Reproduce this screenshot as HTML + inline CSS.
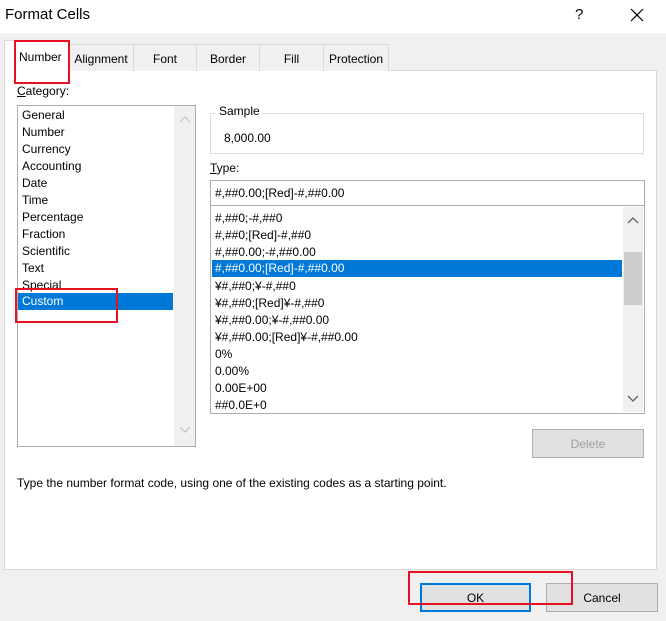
<!DOCTYPE html>
<html><head><style>
*{margin:0;padding:0;box-sizing:border-box}
body{width:666px;height:621px;background:#f0f0f0;font-family:"Segoe UI","Liberation Sans",sans-serif;font-size:12px;color:#000;position:relative;overflow:hidden}
.a{position:absolute}
.tab{position:absolute;top:44px;height:27px;background:#f0f0f0;border:1px solid #d9d9d9;border-bottom:none;text-align:center;line-height:28px;font-size:12px}
.li{position:absolute;left:0;height:17px;line-height:17px;padding-left:4px;white-space:nowrap;font-size:12px}
.sb{position:absolute;background:#f0f0f0}
.redbox{position:absolute;border:2px solid #e81123}
</style></head><body>
<div class="a" style="left:0;top:0;width:666px;height:33px;background:#fff"></div>
<div class="a" style="left:5px;top:6px;font-size:15px">Format Cells</div>
<div class="a" style="left:575px;top:6px;font-size:15px">?</div>
<svg class="a" style="left:630px;top:8px" width="14" height="14"><path d="M1 1L13 13M13 1L1 13" stroke="#000" stroke-width="1.2"/></svg>

<div class="a" style="left:4px;top:70px;width:653px;height:500px;background:#fff;border:1px solid #d9d9d9"></div>
<div class="tab" style="left:68px;width:66px">Alignment</div>
<div class="tab" style="left:133px;width:64px">Font</div>
<div class="tab" style="left:196px;width:64px">Border</div>
<div class="tab" style="left:259px;width:65px">Fill</div>
<div class="tab" style="left:323px;width:66px">Protection</div>
<div class="a" style="left:4px;top:40px;width:65px;height:32px;background:#fff;border:1px solid #d9d9d9;border-bottom:none"></div>
<div class="a" style="left:19px;top:50px;font-size:12px">Number</div>
<div class="redbox" style="left:14px;top:40px;width:56px;height:44px"></div>

<div class="a" style="left:17px;top:84px;font-size:12px"><u>C</u>ategory:</div>
<div class="a" style="left:17px;top:105px;width:179px;height:342px;border:1px solid #adadad;background:#fff">
<div class="li" style="top:1px">General</div>
<div class="li" style="top:18px">Number</div>
<div class="li" style="top:35px">Currency</div>
<div class="li" style="top:52px">Accounting</div>
<div class="li" style="top:69px">Date</div>
<div class="li" style="top:86px">Time</div>
<div class="li" style="top:103px">Percentage</div>
<div class="li" style="top:120px">Fraction</div>
<div class="li" style="top:137px">Scientific</div>
<div class="li" style="top:154px">Text</div>
<div class="li" style="top:171px">Special</div>
<div class="li" style="top:187px;width:155px;height:17px;background:#0078d7;color:#fff">Custom</div>
<div class="sb" style="left:156px;top:0;width:21px;height:340px"></div>
<svg class="a" style="left:161px;top:9px" width="12" height="8"><path d="M1 7L6 2L11 7" stroke="#c0c0c0" fill="none" stroke-width="1.2"/></svg>
<svg class="a" style="left:161px;top:320px" width="12" height="8"><path d="M1 1L6 6L11 1" stroke="#c0c0c0" fill="none" stroke-width="1.2"/></svg>
</div>
<div class="redbox" style="left:15px;top:288px;width:103px;height:35px"></div>

<div class="a" style="left:210px;top:113px;width:434px;height:41px;border:1px solid #dcdcdc"></div>
<div class="a" style="left:216px;top:104px;background:#fff;padding:0 3px;font-size:12px">Sample</div>
<div class="a" style="left:224px;top:131px;font-size:12px">8,000.00</div>

<div class="a" style="left:210px;top:161px;font-size:12px"><u>T</u>ype:</div>
<div class="a" style="left:210px;top:180px;width:435px;height:26px;border:1px solid #adadad;background:#fff;padding:5px 4px;font-size:12px">#,##0.00;[Red]-#,##0.00</div>
<div class="a" style="left:210px;top:205px;width:435px;height:209px;border:1px solid #adadad;background:#fff">
<div class="li" style="top:4px">#,##0;-#,##0</div>
<div class="li" style="top:21px">#,##0;[Red]-#,##0</div>
<div class="li" style="top:38px">#,##0.00;-#,##0.00</div>
<div class="li" style="top:54px;left:1px;width:410px;background:#0078d7;color:#fff;padding-left:3px">#,##0.00;[Red]-#,##0.00</div>
<div class="li" style="top:72px">¥#,##0;¥-#,##0</div>
<div class="li" style="top:89px">¥#,##0;[Red]¥-#,##0</div>
<div class="li" style="top:106px">¥#,##0.00;¥-#,##0.00</div>
<div class="li" style="top:123px">¥#,##0.00;[Red]¥-#,##0.00</div>
<div class="li" style="top:140px">0%</div>
<div class="li" style="top:157px">0.00%</div>
<div class="li" style="top:174px">0.00E+00</div>
<div class="li" style="top:191px">##0.0E+0</div>
<div class="sb" style="left:412px;top:1px;width:20px;height:205px"></div>
<div class="a" style="left:413px;top:46px;width:18px;height:53px;background:#cdcdcd"></div>
<svg class="a" style="left:416px;top:10px" width="12" height="8"><path d="M1 7L6 2L11 7" stroke="#606060" fill="none" stroke-width="1.3"/></svg>
<svg class="a" style="left:416px;top:189px" width="12" height="8"><path d="M1 1L6 6L11 1" stroke="#606060" fill="none" stroke-width="1.3"/></svg>
</div>

<div class="a" style="left:532px;top:429px;width:112px;height:29px;border:1px solid #adadad;background:#e1e1e1;color:#a0a0a0;text-align:center;line-height:28px;font-size:12px">Delete</div>
<div class="a" style="left:17px;top:476px;font-size:12px">Type the number format code, using one of the existing codes as a starting point.</div>

<div class="a" style="left:420px;top:583px;width:111px;height:29px;border:2px solid #0078d7;background:#e1e1e1;text-align:center;line-height:27px;font-size:12px">OK</div>
<div class="a" style="left:546px;top:583px;width:112px;height:29px;border:1px solid #adadad;background:#e1e1e1;text-align:center;line-height:28px;font-size:12px">Cancel</div>
<div class="redbox" style="left:408px;top:571px;width:165px;height:34px"></div>
</body></html>
